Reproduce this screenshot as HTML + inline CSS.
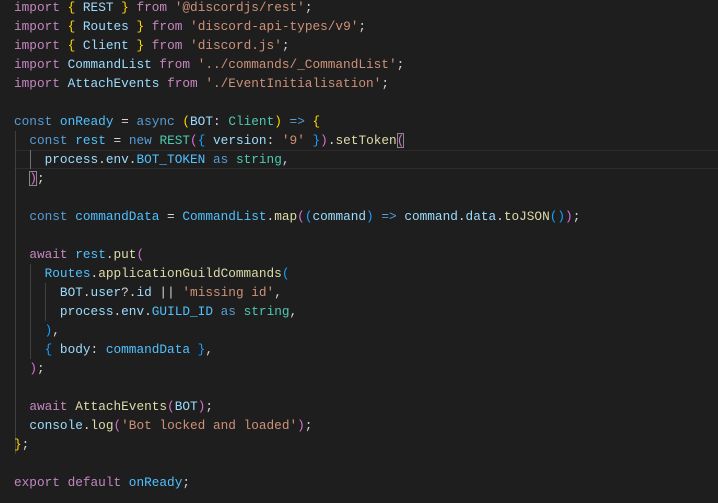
<!DOCTYPE html>
<html><head><meta charset="utf-8"><style>
html,body{margin:0;padding:0;background:#1e1e1e;width:718px;height:503px;overflow:hidden}
pre{position:absolute;left:14px;top:-2.5px;margin:0;font-family:"Liberation Mono",monospace;font-size:12.75px;line-height:19px;color:#d4d4d4;z-index:2}
.k{color:#c586c0}.b{color:#569cd6}.v{color:#9cdcfe}.c{color:#4fc1ff}.t{color:#4ec9b0}.s{color:#ce9178}.f{color:#dcdcaa}
.g{color:#ffd700}.p{color:#da70d6}.q{color:#179fff}
.m{outline:1px solid #888;outline-offset:-1px}
.cur{position:absolute;left:14px;right:0;top:150px;height:17px;border-top:1px solid #2c2c2c;border-bottom:1px solid #2c2c2c;z-index:1}
.ig{position:absolute;width:1px;background:#404040;z-index:1}
</style></head><body>
<div class="cur"></div>
<div class="ig" style="left:15px;top:131px;height:323px"></div>
<div class="ig" style="left:30px;top:150px;height:19px;background:#707070"></div>
<div class="ig" style="left:30px;top:264px;height:95px"></div>
<div class="ig" style="left:45px;top:283px;height:38px"></div>
<pre><span class="k">import</span> <span class="g">{</span> <span class="v">REST</span> <span class="g">}</span> <span class="k">from</span> <span class="s">'@discordjs/rest'</span>;
<span class="k">import</span> <span class="g">{</span> <span class="v">Routes</span> <span class="g">}</span> <span class="k">from</span> <span class="s">'discord-api-types/v9'</span>;
<span class="k">import</span> <span class="g">{</span> <span class="v">Client</span> <span class="g">}</span> <span class="k">from</span> <span class="s">'discord.js'</span>;
<span class="k">import</span> <span class="v">CommandList</span> <span class="k">from</span> <span class="s">'../commands/_CommandList'</span>;
<span class="k">import</span> <span class="v">AttachEvents</span> <span class="k">from</span> <span class="s">'./EventInitialisation'</span>;

<span class="b">const</span> <span class="c">onReady</span> = <span class="b">async</span> <span class="g">(</span><span class="v">BOT</span>: <span class="t">Client</span><span class="g">)</span> <span class="b">=&gt;</span> <span class="g">{</span>
  <span class="b">const</span> <span class="c">rest</span> = <span class="b">new</span> <span class="t">REST</span><span class="p">(</span><span class="q">{</span> <span class="v">version</span>: <span class="s">'9'</span> <span class="q">}</span><span class="p">)</span>.<span class="f">setToken</span><span class="p m">(</span>
    <span class="v">process</span>.<span class="v">env</span>.<span class="c">BOT_TOKEN</span> <span class="b">as</span> <span class="t">string</span>,
  <span class="p m">)</span>;

  <span class="b">const</span> <span class="c">commandData</span> = <span class="c">CommandList</span>.<span class="f">map</span><span class="p">(</span><span class="q">(</span><span class="v">command</span><span class="q">)</span> <span class="b">=&gt;</span> <span class="v">command</span>.<span class="v">data</span>.<span class="f">toJSON</span><span class="q">()</span><span class="p">)</span>;

  <span class="k">await</span> <span class="c">rest</span>.<span class="f">put</span><span class="p">(</span>
    <span class="c">Routes</span>.<span class="f">applicationGuildCommands</span><span class="q">(</span>
      <span class="v">BOT</span>.<span class="v">user</span>?.<span class="v">id</span> || <span class="s">'missing id'</span>,
      <span class="v">process</span>.<span class="v">env</span>.<span class="c">GUILD_ID</span> <span class="b">as</span> <span class="t">string</span>,
    <span class="q">)</span>,
    <span class="q">{</span> <span class="v">body</span>: <span class="c">commandData</span> <span class="q">}</span>,
  <span class="p">)</span>;

  <span class="k">await</span> <span class="f">AttachEvents</span><span class="p">(</span><span class="v">BOT</span><span class="p">)</span>;
  <span class="v">console</span>.<span class="f">log</span><span class="p">(</span><span class="s">'Bot locked and loaded'</span><span class="p">)</span>;
<span class="g">}</span>;

<span class="k">export</span> <span class="k">default</span> <span class="c">onReady</span>;
</pre>
</body></html>
